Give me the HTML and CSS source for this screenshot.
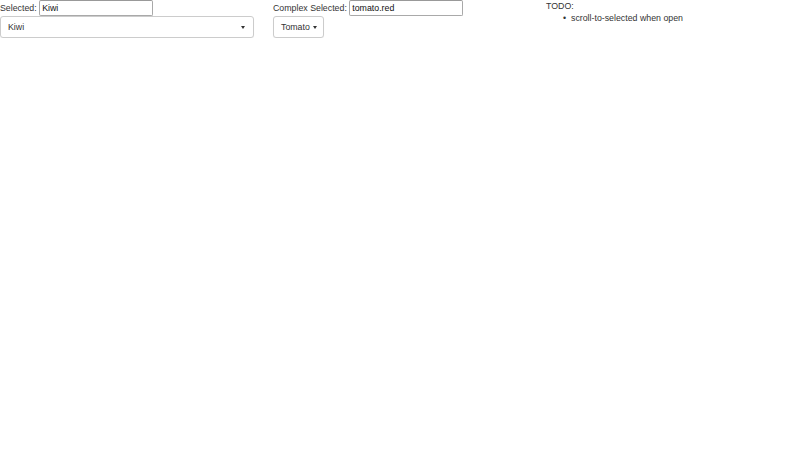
FILE: index.html
```html
<!DOCTYPE html>
<html>
<head>
<meta charset="utf-8">
<link rel="stylesheet" href="styles.css">
</head>
<body>
<div class="row">
  <div class="col">
    <div class="field"><label>Selected: </label><input class="txt" type="text" value="Kiwi"></div>
    <button class="dd dd-wide"><span>Kiwi</span><span class="caret"></span></button>
  </div>
  <div class="col">
    <div class="field"><label>Complex Selected: </label><input class="txt" type="text" value="tomato.red"></div>
    <button class="dd"><span>Tomato</span><span class="caret"></span></button>
  </div>
  <div class="col">
    <div class="todo">TODO:</div>
    <ul class="list">
      <li>scroll-to-selected when open</li>
    </ul>
  </div>
</div>
</body>
</html>
```
FILE: styles.css
```css
html, body {
  margin: 0;
  padding: 0;
  background: #fff;
}
body {
  font-family: "Liberation Sans", Arial, sans-serif;
  font-size: 8.8px;
  color: #333;
  line-height: 12px;
}
.row {
  display: flex;
}
.col {
  width: 273px;
  flex: none;
}
.field {
  display: flex;
  align-items: center;
  height: 16px;
}
.field label {
  white-space: pre;
  color: #333;
}
.txt {
  box-sizing: border-box;
  width: 114px;
  height: 16px;
  margin: 0;
  padding: 0 2px;
  font-family: "Liberation Sans", Arial, sans-serif;
  font-size: 8.8px;
  color: #111;
  border: 1px solid #a9a9a9;
  border-top-color: #999;
  border-radius: 2px;
  background: #fff;
}
.dd {
  box-sizing: border-box;
  display: inline-flex;
  align-items: center;
  height: 22px;
  margin: 0;
  padding: 0 6px 0 7px;
  font-family: "Liberation Sans", Arial, sans-serif;
  font-size: 8.8px;
  color: #333;
  background: #fff;
  border: 1px solid #ccc;
  border-radius: 3px;
  box-shadow: 0 1px 1px rgba(0,0,0,0.05);
}
.dd-wide {
  width: 254px;
  justify-content: space-between;
  padding-right: 8px;
}
.caret {
  display: inline-block;
  width: 0;
  height: 0;
  margin-left: 3px;
  border-top: 3px solid #333;
  border-left: 2.5px solid transparent;
  border-right: 2.5px solid transparent;
}
.list {
  margin: 0;
  padding-left: 25px;
  list-style: none;
}
.list li::before {
  content: "\2022";
  display: inline-block;
  width: 8px;
  margin-left: -8px;
}
```
